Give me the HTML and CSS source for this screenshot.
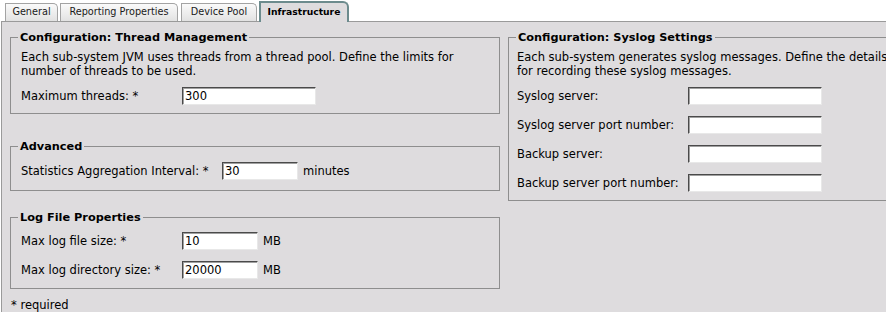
FILE: index.html
```html
<!DOCTYPE html>
<html lang="en">
<head>
<meta charset="utf-8">
<title>Infrastructure</title>
<link rel="stylesheet" href="styles.css">
</head>
<body>
<div class="tabs">
  <div class="tab tab-general">General</div>
  <div class="tab tab-reporting">Reporting Properties</div>
  <div class="tab tab-pool">Device Pool</div>
  <div class="tab tab-infra active">Infrastructure</div>
</div>
<div class="panel">
  <div class="columns">
    <div class="col-left">
      <fieldset class="group g-thread">
        <legend>Configuration: Thread Management</legend>
        <p class="desc">Each sub-system JVM uses threads from a thread pool. Define the limits for number of threads to be used.</p>
        <div class="row first">
          <label class="lbl lbl-short">Maximum threads: *</label>
          <input class="field field-wide" type="text" value="300">
        </div>
      </fieldset>
      <fieldset class="group g-adv">
        <legend>Advanced</legend>
        <div class="row">
          <label class="lbl lbl-long">Statistics Aggregation Interval: *</label>
          <input class="field field-small" type="text" value="30">
          <span class="unit">minutes</span>
        </div>
      </fieldset>
      <fieldset class="group g-log">
        <legend>Log File Properties</legend>
        <div class="row">
          <label class="lbl lbl-short">Max log file size: *</label>
          <input class="field field-small" type="text" value="10">
          <span class="unit">MB</span>
        </div>
        <div class="row next">
          <label class="lbl lbl-short">Max log directory size: *</label>
          <input class="field field-small" type="text" value="20000">
          <span class="unit">MB</span>
        </div>
      </fieldset>
      <div class="req">* required</div>
    </div>
    <div class="col-right">
      <fieldset class="group g-syslog">
        <legend>Configuration: Syslog Settings</legend>
        <p class="desc desc-right">Each sub-system generates syslog messages. Define the details for recording these syslog messages.</p>
        <div class="row first">
          <label class="lbl lbl-right">Syslog server:</label>
          <input class="field field-wide" type="text" value="">
        </div>
        <div class="row next">
          <label class="lbl lbl-right">Syslog server port number:</label>
          <input class="field field-wide" type="text" value="">
        </div>
        <div class="row next">
          <label class="lbl lbl-right">Backup server:</label>
          <input class="field field-wide" type="text" value="">
        </div>
        <div class="row next">
          <label class="lbl lbl-right">Backup server port number:</label>
          <input class="field field-wide" type="text" value="">
        </div>
      </fieldset>
    </div>
  </div>
</div>
</body>
</html>
```
FILE: styles.css
```css
html, body {
  margin: 0;
  padding: 0;
  background: #ffffff;
  overflow: hidden;
}
body {
  font-family: "DejaVu Sans", Verdana, sans-serif;
  font-size: 11.5px;
  color: #000;
  width: 886px;
  height: 312px;
}

/* Tabs */
.tabs {
  display: flex;
  align-items: flex-end;
  height: 21px;
  padding-left: 5px;
}
.tab {
  box-sizing: border-box;
  height: 18px;
  border: 1px solid #a3a3a3;
  border-bottom: none;
  border-top-right-radius: 5px;
  background: linear-gradient(#fafafa, #e2e2e2);
  font-size: 9.7px;
  line-height: 16px;
  text-align: center;
  color: #1a1a1a;
  white-space: nowrap;
}
.tab-general { width: 53px; margin-right: 2px; }
.tab-reporting { width: 118px; margin-right: 3px; }
.tab-pool { width: 76px; margin-right: 2px; }
.tab-infra { width: 90px; }
.tab.active {
  position: relative;
  z-index: 1;
  height: 21px;
  margin-bottom: -1px;
  border: 2px solid #6c8b8d;
  border-bottom: none;
  border-top-right-radius: 6px;
  background: #dedcde;
  font-weight: bold;
  font-size: 9.2px;
  padding-top: 1px;
  color: #000;
}

/* Panel */
.panel {
  margin-left: 1px;
  border-top: 1px solid #9a9a9a;
  border-left: 1px solid #9a9a9a;
  background: #dedcde;
  height: 291px;
  padding: 7px 0 0 8px;
  box-sizing: border-box;
  overflow: hidden;
}
.columns {
  display: flex;
  align-items: flex-start;
  gap: 8px;
}
.col-left {
  width: 490px;
  flex: none;
}
.col-right {
  flex: 1;
  min-width: 0;
  overflow: hidden;
}

/* Fieldsets */
.group {
  margin: 0;
  border: 1px solid #8e8e8e;
  padding: 5px 10px 8px 10px;
  min-width: 0;
}
.group legend {
  font-weight: bold;
  font-size: 11.3px;
  line-height: 14px;
  padding: 2px 2px 0;
  margin-left: -3px;
}
.g-adv {
  margin-top: 24px;
  padding-top: 8px;
  padding-bottom: 10px;
}
.g-log {
  margin-top: 18px;
  padding-top: 7px;
  padding-bottom: 9px;
}
.g-syslog {
  width: 394px;
  box-sizing: border-box;
  padding: 5px 8px 8px 8px;
}
.g-syslog legend {
  margin-left: -1px;
}

.desc {
  margin: 0;
  line-height: 14px;
}
.desc-right {
  width: 372px;
}

.row {
  display: flex;
  align-items: center;
  height: 18px;
}
.row.first { margin-top: 9px; }
.row.next { margin-top: 11px; }

.lbl {
  flex: none;
  white-space: nowrap;
}
.lbl-short { width: 161px; }
.lbl-long { width: 201px; }
.lbl-right { width: 171px; }

.field {
  box-sizing: border-box;
  height: 18px;
  margin: 0;
  padding: 0 2px;
  background: #fff;
  border: 1px solid;
  border-color: #4a4a4a #e8e8e8 #e8e8e8 #4a4a4a;
  box-shadow: inset 1px 1px 0 #a0a0a0;
  font-family: "DejaVu Sans", Verdana, sans-serif;
  font-size: 11.5px;
  color: #000;
  outline: none;
}
.field-wide { width: 134px; }
.field-small { width: 76px; }

.unit {
  margin-left: 5px;
}

.req {
  margin-top: 9px;
  margin-left: 1px;
  line-height: 14px;
}
```
